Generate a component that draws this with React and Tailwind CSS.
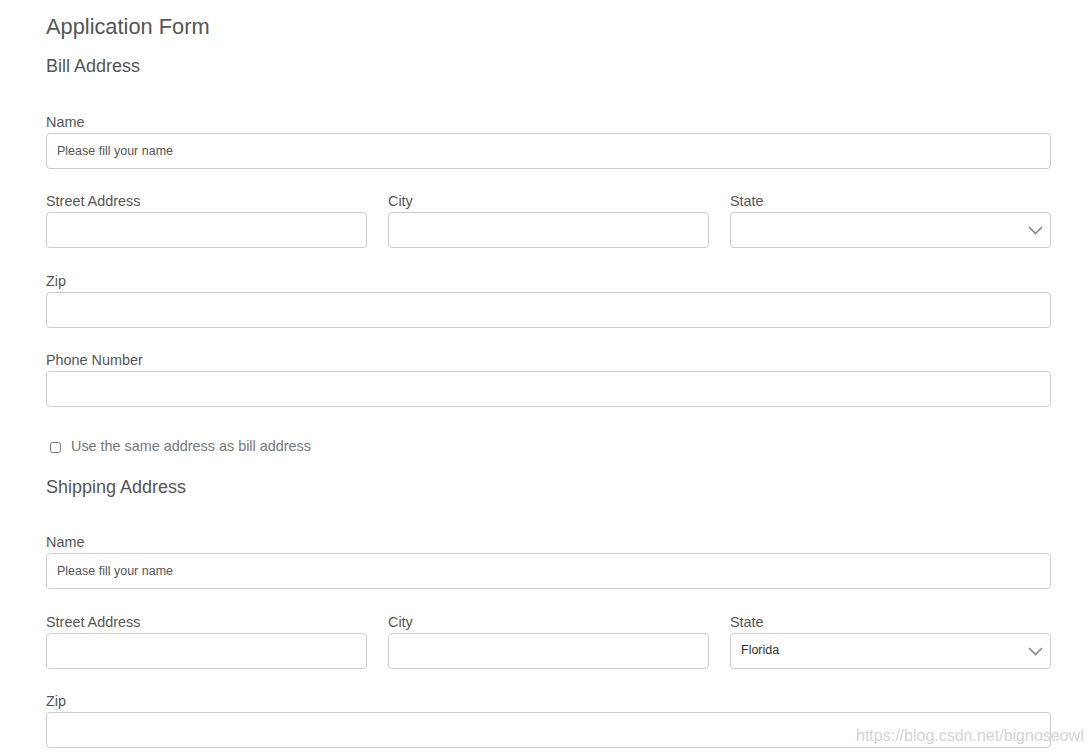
import React from 'react';

const Label = ({ children }) => (
    <label className="block h-[20px] leading-[20px] text-[14.4px] text-[#555] mt-[1px] mb-[1px]">{children}</label>
);

const TextInput = ({ placeholder }) => (
    <input
        type="text"
        placeholder={placeholder}
        className="block w-full h-[36px] px-[10px] border border-[#ccc] rounded-[4px] bg-white text-[12.5px] text-[#333] placeholder:text-[#555] outline-none"
    />
);

const SelectBox = ({ value }) => (
    <div className="relative w-full h-[36px] border border-[#ccc] rounded-[4px] bg-white flex items-center px-[10px]">
        <span className="text-[12.5px] text-[#333]">{value}</span>
        <svg className="absolute right-[7px] top-[13px]" width="15" height="9" viewBox="0 0 15 9" fill="none">
            <path d="M1 1 L7.5 7.5 L14 1" stroke="#888" strokeWidth="1.6" />
        </svg>
    </div>
);

const Field = ({ label, children }) => (
    <div>
        <Label>{label}</Label>
        {children}
    </div>
);

const AddressBlock = ({ state, phone }) => (
    <div className="flex flex-col gap-y-[21.4px]">
        <Field label="Name">
            <TextInput placeholder="Please fill your name" />
        </Field>
        <div className="grid grid-cols-3 gap-x-[21px]">
            <Field label="Street Address">
                <TextInput />
            </Field>
            <Field label="City">
                <TextInput />
            </Field>
            <Field label="State">
                <SelectBox value={state} />
            </Field>
        </div>
        <Field label="Zip">
            <TextInput />
        </Field>
        {phone && (
            <Field label="Phone Number">
                <TextInput />
            </Field>
        )}
    </div>
);

export default function App() {
    return (
        <div className="relative min-h-[755px] bg-white font-['Liberation_Sans',Arial,sans-serif]">
            <div className="ml-[46px] w-[1005px] pt-[14px]">
                <h1 className="text-[21.8px] leading-[25px] text-[#555]">Application Form</h1>
                <h2 className="mt-[16px] text-[18px] leading-[22px] text-[#555]">Bill Address</h2>

                <div className="mt-[34px]">
                    <AddressBlock state="" phone />
                </div>

                <label className="mt-[30px] flex items-center h-[20px] pl-[4px] gap-[10px] text-[14.4px] text-[#777]">
                    <input type="checkbox" className="w-[11px] h-[11px] m-0" />
                    Use the same address as bill address
                </label>

                <h2 className="mt-[19px] text-[18px] leading-[22px] text-[#555]">Shipping Address</h2>

                <div className="mt-[33px]">
                    <AddressBlock state="Florida" />
                </div>
            </div>

            <div className="absolute left-[856px] top-[726px] text-[16px] leading-[20px] text-[#d4d4d4]">
                https://blog.csdn.net/bignoseowl
            </div>
        </div>
    );
}
